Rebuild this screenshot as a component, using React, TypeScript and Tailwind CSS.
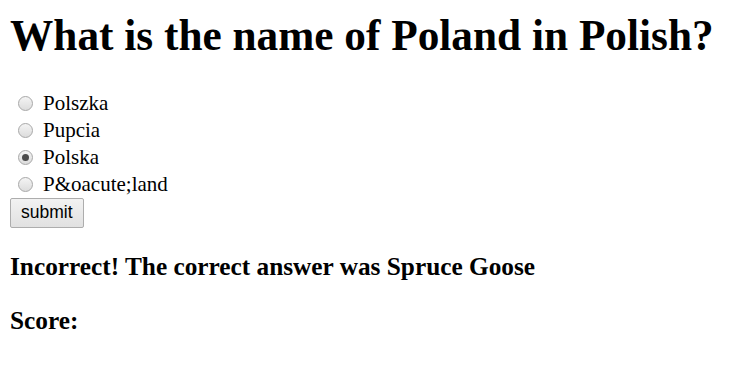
import React from 'react'

const options = [
  { label: 'Polszka', checked: false },
  { label: 'Pupcia', checked: false },
  { label: 'Polska', checked: true },
  { label: 'P&oacute;land', checked: false },
]

function Radio({ checked }: { checked: boolean }) {
  return (
    <span className="inline-flex items-center justify-center w-[15px] h-[15px] rounded-full border border-[#a8a8a8] bg-gradient-to-b from-[#f4f4f4] to-[#dcdcdc] ml-[8px] mr-[10px]">
      {checked && <span className="w-[7px] h-[7px] rounded-full bg-[#4a4a4a]" />}
    </span>
  )
}

export default function App() {
  return (
    <div className="min-h-[365px] bg-white text-black px-[10px] pt-[11px] font-['Liberation_Serif','Times_New_Roman',serif]">
      <h1 className="text-[43.3px] leading-[48px] font-bold">What is the name of Poland in Polish?</h1>
      <form className="mt-[31px]">
        {options.map((o) => (
          <label key={o.label} className="flex items-center h-[27px] text-[21px]">
            <Radio checked={o.checked} />
            <span>{o.label}</span>
          </label>
        ))}
        <button
          type="button"
          className="h-[30px] px-[10px] border border-[#adadad] rounded-[2px] bg-gradient-to-b from-[#f2f2f2] to-[#e1e1e1] text-[17.5px] leading-none font-['Liberation_Sans',Arial,sans-serif]"
        >
          submit
        </button>
      </form>
      <h3 className="mt-[24px] text-[25.3px] leading-[28px] font-bold">Incorrect! The correct answer was Spruce Goose</h3>
      <h3 className="mt-[26px] text-[25.3px] leading-[28px] font-bold">Score:</h3>
    </div>
  )
}
